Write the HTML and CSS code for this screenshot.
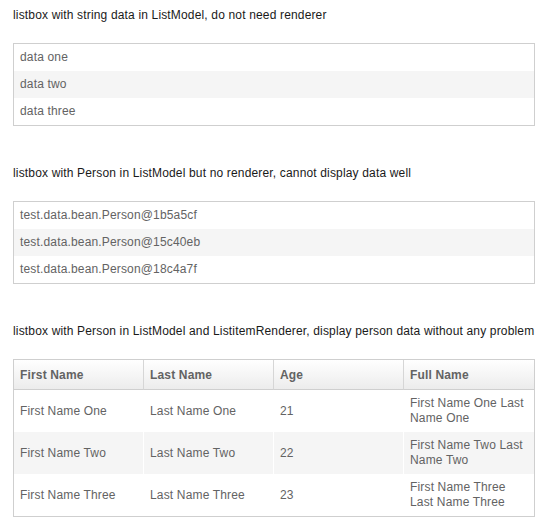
FILE: index.html
```html
<!DOCTYPE html>
<html>
<head>
<meta charset="utf-8">
<link rel="stylesheet" href="styles.css">
</head>
<body>
<div class="page">
  <div class="caption">listbox with string data in ListModel, do not need renderer</div>
  <div class="listbox">
    <div class="item">data one</div>
    <div class="item">data two</div>
    <div class="item">data three</div>
  </div>

  <div class="caption">listbox with Person in ListModel but no renderer, cannot display data well</div>
  <div class="listbox">
    <div class="item">test.data.bean.Person@1b5a5cf</div>
    <div class="item">test.data.bean.Person@15c40eb</div>
    <div class="item">test.data.bean.Person@18c4a7f</div>
  </div>

  <div class="caption">listbox with Person in ListModel and ListitemRenderer, display person data without any problem</div>
  <table class="grid">
    <colgroup><col class="c"><col class="c"><col class="c"><col class="c"></colgroup>
    <thead>
      <tr><th>First Name</th><th>Last Name</th><th>Age</th><th>Full Name</th></tr>
    </thead>
    <tbody>
      <tr><td>First Name One</td><td>Last Name One</td><td>21</td><td>First Name One Last Name One</td></tr>
      <tr><td>First Name Two</td><td>Last Name Two</td><td>22</td><td>First Name Two Last Name Two</td></tr>
      <tr><td>First Name Three</td><td>Last Name Three</td><td>23</td><td>First Name Three Last Name Three</td></tr>
    </tbody>
  </table>
</div>
</body>
</html>
```

FILE: styles.css
```css
html, body {
  margin: 0;
  padding: 0;
  background: #fff;
}
.page {
  padding: 7px 10px 0 13px;
  font-family: "Liberation Sans", Arial, sans-serif;
  font-size: 12px;
  letter-spacing: 0.16px;
}
.caption {
  line-height: 16px;
  color: #1a1a1a;
  margin-bottom: 20px;
  white-space: nowrap;
}
.listbox {
  width: 520px;
  border: 1px solid #cfcfcf;
  margin-bottom: 39px;
}
.item {
  height: 27px;
  line-height: 27px;
  padding-left: 6px;
  color: #636363;
}
.item:nth-child(even) {
  background: #f5f5f5;
}
.grid {
  width: 522px;
  table-layout: fixed;
  border-collapse: separate;
  border-spacing: 0;
  border: 1px solid #cfcfcf;
  color: #636363;
}
.grid col.c {
  width: 130px;
}
.grid th {
  height: 30px;
  padding: 0 6px;
  text-align: left;
  font-weight: bold;
  color: #636363;
  background: linear-gradient(#ffffff, #ececec);
  border-right: 1px solid #d6d6d6;
  border-bottom: 1px solid #cfcfcf;
  box-sizing: border-box;
}
.grid th:last-child,
.grid td:last-child {
  border-right: none;
}
.grid td {
  height: 42px;
  padding: 0 6px;
  line-height: 15px;
  border-right: 1px solid #fff;
  vertical-align: middle;
}
.grid tbody tr:nth-child(even) td {
  background: #f5f5f5;
}
```
